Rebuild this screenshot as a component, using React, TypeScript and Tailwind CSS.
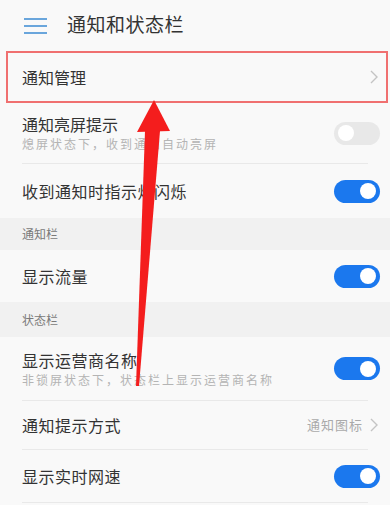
import React from "react"

const font = { fontFamily: '"Noto Sans CJK SC", "Noto Sans", sans-serif' }

function Toggle({ on }: { on: boolean }) {
  return (
    <div
      className={
        "w-[46px] h-[23px] rounded-full flex items-center px-[4px] " +
        (on ? "bg-[#1b78ee] justify-end" : "bg-[#e8e8e8] justify-start")
      }
    >
      <div className="w-[16px] h-[16px] rounded-full bg-white" />
    </div>
  )
}

function Chevron() {
  return (
    <svg width="8" height="14" viewBox="0 0 8 14" fill="none">
      <path d="M1 1l6 6-6 6" stroke="#c4c4c4" strokeWidth="1.4" />
    </svg>
  )
}

function Divider() {
  return <div className="mx-[22px] h-px bg-[#e9e9e9]" />
}

function Section({ label, h }: { label: string; h: string }) {
  return (
    <div className={"bg-[#f1f1f1] flex items-center pl-[22px] text-[12px] text-[#7a7a7a] " + h}>{label}</div>
  )
}

export default function App() {
  return (
    <div className="relative w-[390px] h-[505px] overflow-hidden bg-[#f9f9f9]" style={font}>
      <header className="h-[51px] flex items-center pl-[24px] gap-[20px]">
        <svg width="23" height="16" viewBox="0 0 23 16">
          <rect x="0" y="0" width="23" height="2" fill="#6aa6dc" />
          <rect x="0" y="7" width="23" height="2" fill="#6aa6dc" />
          <rect x="0" y="14" width="23" height="2" fill="#6aa6dc" />
        </svg>
        <h1 className="text-[19px] text-[#333] mt-[-2px] tracking-[0.5px]">通知和状态栏</h1>
      </header>

      <div className="ml-[6px] mr-[2px] h-[52px] border-2 border-[#f07070] flex items-center justify-between pl-[14px] pr-[8px]">
        <span className="text-[16px] text-[#333]">通知管理</span>
        <Chevron />
      </div>

      <div className="h-[60px] flex items-center justify-between pl-[22px] pr-[10px]">
        <div className="flex flex-col">
          <span className="text-[16px] text-[#333] leading-[20px]">通知亮屏提示</span>
          <span className="text-[12px] text-[#b4b4b4] leading-[16px] mt-[2px] tracking-[2px]">熄屏状态下，收到通知自动亮屏</span>
        </div>
        <Toggle on={false} />
      </div>
      <Divider />

      <div className="h-[54px] flex items-center justify-between pl-[22px] pr-[10px]">
        <span className="text-[16px] text-[#333] tracking-[0.5px]">收到通知时指示灯闪烁</span>
        <Toggle on />
      </div>

      <Section label="通知栏" h="h-[32px]" />

      <div className="h-[52px] flex items-center justify-between pl-[22px] pr-[10px]">
        <span className="text-[16px] text-[#333] tracking-[0.5px]">显示流量</span>
        <Toggle on />
      </div>

      <Section label="状态栏" h="h-[35px]" />

      <div className="h-[63px] flex items-center justify-between pl-[22px] pr-[10px]">
        <div className="flex flex-col">
          <span className="text-[16px] text-[#333] leading-[20px] tracking-[0.5px]">显示运营商名称</span>
          <span className="text-[12px] text-[#b4b4b4] leading-[16px] mt-[2px] tracking-[2px]">非锁屏状态下，状态栏上显示运营商名称</span>
        </div>
        <Toggle on />
      </div>
      <Divider />

      <div className="h-[48px] flex items-center justify-between pl-[22px] pr-[12px]">
        <span className="text-[16px] text-[#333] tracking-[0.5px]">通知提示方式</span>
        <div className="flex items-center gap-[7px]">
          <span className="text-[13px] text-[#aaa] tracking-[1px]">通知图标</span>
          <Chevron />
        </div>
      </div>
      <Divider />

      <div className="h-[52px] flex items-center justify-between pl-[22px] pr-[10px]">
        <span className="text-[16px] text-[#333] tracking-[0.5px]">显示实时网速</span>
        <Toggle on />
      </div>
      <Divider />

      <svg className="absolute left-0 top-0" width="390" height="505" viewBox="0 0 390 505">
        <polygon points="154,100 170,131 137,132" fill="#f41d1d" />
        <polygon points="145,131 160,131 139,386 136,386" fill="#f41d1d" />
      </svg>
    </div>
  )
}
